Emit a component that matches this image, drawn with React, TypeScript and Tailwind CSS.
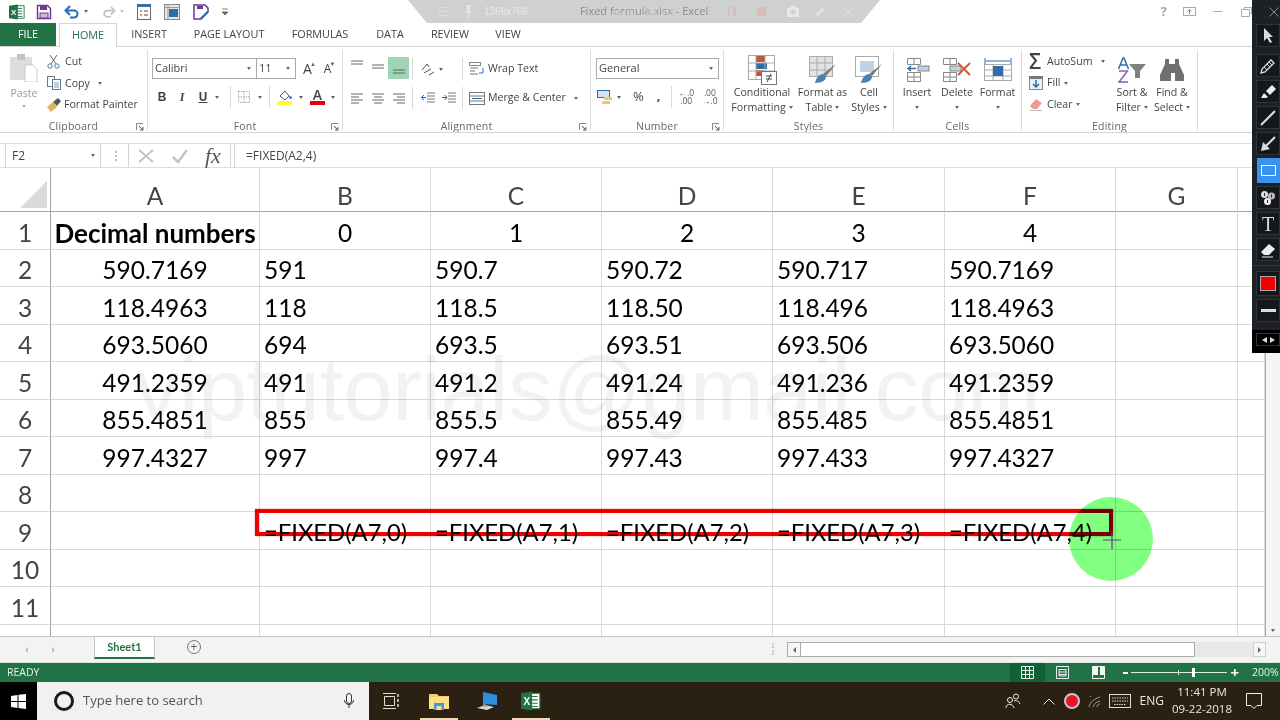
import type { ReactNode } from "react"

// Excel 2013 window with screen recorder overlays (1280x720)

const rows: string[][] = [
  ["590.7169", "591", "590.7", "590.72", "590.717", "590.7169"],
  ["118.4963", "118", "118.5", "118.50", "118.496", "118.4963"],
  ["693.5060", "694", "693.5", "693.51", "693.506", "693.5060"],
  ["491.2359", "491", "491.2", "491.24", "491.236", "491.2359"],
  ["855.4851", "855", "855.5", "855.49", "855.485", "855.4851"],
  ["997.4327", "997", "997.4", "997.43", "997.433", "997.4327"],
]

const cell = "border-r border-b border-[#d9d9d9] text-black flex items-center pt-[6px] overflow-visible whitespace-nowrap"
const rowHead = "border-r border-b border-r-[#a6a6a6] border-b-[#d9d9d9] text-[24.5px] text-[#444] flex items-center justify-center pt-[6px]"
const colHead = "border-r border-b border-r-[#d9d9d9] border-b-[#a6a6a6] text-[24.5px] text-[#444] flex items-center justify-center"

function Caret({ className = "" }: { className?: string }) {
  return <span className={"inline-block w-0 h-0 border-x-[2.5px] border-t-[3px] border-x-transparent border-t-[#666] " + className} />
}

function Sep({ className = "" }: { className?: string }) {
  return <span className={"w-px h-[22px] bg-[#d8d8d8] shrink-0 " + className} />
}

function Launcher() {
  return (
    <svg width="8" height="8" viewBox="0 0 8 8" className="absolute right-[3px] bottom-[2px]">
      <path d="M.5 7V.5H7" fill="none" stroke="#888" />
      <path d="M3 3l4 4M7 4v3H4" fill="none" stroke="#555" />
    </svg>
  )
}

function Group({ className, label, launcher, children }: { className: string; label: string; launcher?: boolean; children: ReactNode }) {
  return (
    <div className={"shrink-0 flex flex-col mt-[3px] h-[81px] border-r border-[#dcdcdc] " + className}>
      <div className="h-[70px] shrink-0">{children}</div>
      <div className="relative h-[13px] shrink-0 leading-[13px] text-center text-[10.5px] text-[#666] tracking-[0.2px]">
        {label}
        {launcher && <Launcher />}
      </div>
    </div>
  )
}

function BigButton({ className, icon, lines, caretOnly }: { className: string; icon: ReactNode; lines: string[]; caretOnly?: boolean }) {
  return (
    <div className={"shrink-0 flex flex-col items-center pt-[4px] text-[10.6px] leading-[15px] text-[#444] whitespace-nowrap " + className}>
      <div className="h-[31px] flex items-center justify-center">{icon}</div>
      {lines.map((l, i) => (
        <div key={l}>
          {l}
          {!caretOnly && i === lines.length - 1 && <Caret className="ml-[3px] mb-[2px]" />}
        </div>
      ))}
      {caretOnly && <Caret className="mt-[6px]" />}
    </div>
  )
}

function AlignIcon({ kind }: { kind: "l" | "c" | "r" | "t" | "m" | "b" }) {
  const lines: Record<string, string> = {
    l: "M1 3h12M1 6h8M1 9h12M1 12h8",
    c: "M1 3h12M3 6h8M1 9h12M3 12h8",
    r: "M1 3h12M5 6h8M1 9h12M5 12h8",
    t: "M1 2h12M1 5h12",
    m: "M1 6h12M1 9h12",
    b: "M1 9h12M1 12h12",
  }
  return (
    <svg width="14" height="15" viewBox="0 0 14 15">
      <path d={lines[kind]} stroke="#666" fill="none" />
    </svg>
  )
}

function ExcelLogo({ size }: { size: number }) {
  return (
    <svg width={size} height={size} viewBox="0 0 18 18">
      <rect x="8" y="2" width="9" height="14" fill="#fff" stroke="#217346" />
      <path d="M10 5h5M10 8h5M10 11h5M10 14h5" stroke="#217346" />
      <path d="M0 2l10-1.500v17L0 16z" fill="#217346" />
      <text x="2.200" y="12.500" fontSize="9" fontWeight="700" fill="#fff" fontFamily="Liberation Sans, sans-serif">X</text>
    </svg>
  )
}

function TitleBar() {
  return (
    <div className="h-[23px] shrink-0 flex items-center relative bg-white">
      <div className="ml-[9px]"><ExcelLogo size={16} /></div>
      <svg width="16" height="16" viewBox="0 0 16 16" className="ml-[11px]">
        <path d="M1.500 1.500h10l3 3v10h-13z" fill="none" stroke="#6b3a90" strokeWidth="1.500" />
        <rect x="4" y="2" width="7" height="4" fill="#6b3a90" />
        <rect x="4" y="9" width="8" height="5" fill="#cdb9dc" stroke="#6b3a90" />
      </svg>
      <svg width="16" height="14" viewBox="0 0 16 14" className="ml-[12px]">
        <path d="M2 5.500h8a3.500 3.500 0 0 1 0 7H6" fill="none" stroke="#2b6cb0" strokeWidth="2" />
        <path d="M6 1L1.500 5.500 6 10" fill="none" stroke="#2b6cb0" strokeWidth="2" />
      </svg>
      <Caret className="ml-[4px]" />
      <svg width="14" height="14" viewBox="0 0 16 14" className="ml-[14px]">
        <path d="M14 5.500H6a3.500 3.500 0 0 0 0 7h4" fill="none" stroke="#c4c4c4" strokeWidth="2" />
        <path d="M10 1l4.500 4.500L10 10" fill="none" stroke="#c4c4c4" strokeWidth="2" />
      </svg>
      <Caret className="ml-[4px] opacity-40" />
      <svg width="14" height="16" viewBox="0 0 14 16" className="ml-[13px]">
        <rect x=".5" y=".5" width="13" height="15" fill="#fff" stroke="#666" />
        <rect x="0" y="0" width="14" height="3" fill="#3f6f9f" />
        <path d="M3 7h2M7 7h4M3 11h2M7 11h4" stroke="#444" />
      </svg>
      <svg width="16" height="16" viewBox="0 0 16 16" className="ml-[13px]">
        <rect x=".5" y=".5" width="15" height="15" fill="#e4e8ec" stroke="#888" />
        <rect x="5" y="5" width="9" height="8" fill="#2f6ea5" />
        <path d="M0 3.500h16M4 0v16" stroke="#999" />
      </svg>
      <svg width="16" height="16" viewBox="0 0 16 16" className="ml-[13px]">
        <path d="M1 1h11l3 3v4L8 15H1z" fill="#fff" stroke="#6b3a90" strokeWidth="1.500" />
        <rect x="4" y="2" width="6" height="3" fill="#6b3a90" />
        <path d="M7 14l7-7 1.500 1.500-7 7z" fill="#2b6cb0" />
      </svg>
      <svg width="8" height="8" viewBox="0 0 8 8" className="ml-[12px]">
        <path d="M1 1h6M1 4h6l-3 3z" stroke="#666" fill="#666" strokeWidth=".8" />
      </svg>

      <div className="ml-auto mr-[28px] flex items-center text-[#a8a8a8]">
        <span className="text-[13px] font-bold mr-[16px]">?</span>
        <svg width="13" height="9" viewBox="0 0 13 9" className="mr-[17px]">
          <rect x=".5" y=".5" width="12" height="8" fill="none" stroke="#aaa" />
          <path d="M6.500 7V3M4.500 4.500l2-2 2 2" stroke="#888" fill="none" />
        </svg>
        <span className="w-[9px] h-[1.500px] bg-[#aaa] mr-[19px]" />
        <svg width="11" height="10" viewBox="0 0 11 10">
          <path d="M3 2.500V.5h7.500v6H8.500M.5 2.500h8v7h-8z" fill="none" stroke="#aaa" />
        </svg>
      </div>
    </div>
  )
}

// recorder's strip that hangs over the title bar
function RecorderStrip() {
  return (
    <div className="absolute left-[408px] top-0 w-[472px] h-[23px] bg-[#cfd0d0] [clip-path:polygon(0_0,100%_0,96%_100%,4%_100%)] flex items-center">
      <span className="ml-[30px] flex flex-col gap-[3px]">
        <span className="w-[10px] h-px bg-[#dedede]" />
        <span className="w-[10px] h-px bg-[#dedede]" />
        <span className="w-[10px] h-px bg-[#dedede]" />
      </span>
      <svg width="9" height="13" viewBox="0 0 9 13" className="ml-[16px]">
        <path d="M2 0h5v1L6 2v4l2 2H1l2-2V2L2 1zM4 8h1v5H4z" fill="#e2e6ea" />
      </svg>
      <span className="ml-[11px] text-[10px] text-[#e9e9e9] font-['Liberation_Sans',sans-serif]">1366x768</span>
      <span className="relative ml-[52px] w-[124px] text-[11px] text-[#8d8d8d] whitespace-nowrap text-center">
        Fixed formula.xlsx - Excel
        <span className="absolute left-[2px] right-0 top-0 text-[11px] text-[#d8d8d8] opacity-70">00:01:39:59</span>
      </span>
      <span className="ml-[24px] flex gap-[3px]">
        <span className="w-[2.500px] h-[9px] bg-[#d8bdb9]" />
        <span className="w-[2.500px] h-[9px] bg-[#d8bdb9]" />
      </span>
      <span className="ml-[21px] w-[9px] h-[9px] bg-[#d8bdb9]" />
      <svg width="14" height="11" viewBox="0 0 14 11" className="ml-[20px]">
        <path d="M1 2h3l1-2h4l1 2h3v9H1z" fill="#e8e8e8" />
        <circle cx="7" cy="6" r="2.500" fill="#cfd0d0" />
      </svg>
      <svg width="12" height="12" viewBox="0 0 12 12" className="ml-[14px]">
        <path d="M1 11l1-3 6-6 2 2-6 6z" fill="#dde3ea" />
      </svg>
      <svg width="9" height="9" viewBox="0 0 9 9" className="ml-[18px]">
        <path d="M.5.5l8 8M8.500.5l-8 8" stroke="#e2e2e2" fill="none" />
      </svg>
    </div>
  )
}

function Tabs() {
  const others = [
    ["INSERT", "w-[64px]"],
    ["PAGE LAYOUT", "w-[96px]"],
    ["FORMULAS", "w-[86px]"],
    ["DATA", "w-[54px]"],
    ["REVIEW", "w-[66px]"],
    ["VIEW", "w-[50px]"],
  ]
  return (
    <div className="h-[24px] shrink-0 flex text-[10.8px] text-[#444] border-b border-[#d4d4d4] bg-white">
      <div className="w-[56px] h-[23px] bg-[#217346] text-white flex items-center justify-center">FILE</div>
      <div className="ml-[3px] w-[58px] h-[24px] border-x border-t border-[#d4d4d4] bg-white text-[#217346] flex items-center justify-center">HOME</div>
      {others.map(([t, c]) => (
        <div key={t} className={"h-[23px] flex items-center justify-center " + c}>{t}</div>
      ))}
    </div>
  )
}

function Combo({ className, text }: { className: string; text: string }) {
  return (
    <div className={"h-[21px] border border-[#ababab] bg-white flex items-center justify-between pl-[2px] pr-[5px] text-[11px] text-[#444] " + className}>
      {text}
      <Caret />
    </div>
  )
}

function Ribbon() {
  return (
    <div className="h-[86px] shrink-0 flex border-b border-[#d4d4d4] bg-white text-[#444] overflow-hidden">
      {/* Clipboard */}
      <Group className="w-[148px]" label="Clipboard" launcher>
        <div className="flex">
          <div className="w-[47px] flex flex-col items-center pl-[1px] pt-[4px] text-[10.6px] text-[#9a9a9a]">
            <svg width="28" height="28" viewBox="0 0 28 28">
              <rect x="0" y="3" width="22" height="23" fill="#dcdcdc" />
              <rect x="7" y="0" width="8" height="6" fill="#c4c4c4" />
              <path d="M15 11h8l4 4v13H15z" fill="#fff" stroke="#c8c8c8" />
            </svg>
            <div className="mt-[4px] leading-[14px]">Paste</div>
            <Caret className="mt-[5px] opacity-50" />
          </div>
          <div className="flex flex-col text-[10.6px] leading-[21.500px] pt-[1px]">
            <div className="flex items-center h-[21.500px]">
              <svg width="14" height="14" viewBox="0 0 14 14" className="mr-[4px]">
                <circle cx="3" cy="11" r="2.200" fill="none" stroke="#4b7fb0" />
                <circle cx="10" cy="11" r="2.200" fill="none" stroke="#4b7fb0" />
                <path d="M4 9l6-9M9 9L3 0" stroke="#666" fill="none" />
              </svg>
              Cut
            </div>
            <div className="flex items-center h-[21.500px]">
              <svg width="14" height="14" viewBox="0 0 14 14" className="mr-[4px]">
                <rect x=".5" y=".5" width="7" height="10" fill="#fff" stroke="#777" />
                <rect x="5.500" y="3.500" width="8" height="10" fill="#fff" stroke="#4b7fb0" />
                <path d="M7 7h5M7 9h5M7 11h5" stroke="#999" />
              </svg>
              Copy
              <Caret className="ml-[8px]" />
            </div>
            <div className="flex items-center h-[21.500px]">
              <svg width="15" height="14" viewBox="0 0 15 14" className="mr-[2px]">
                <path d="M0 9l6-5 4 5-6 5z" fill="#e0b060" />
                <path d="M6 4l5-4 3 3-4 5z" fill="#555" />
              </svg>
              Format Painter
            </div>
          </div>
        </div>
      </Group>

      {/* Font */}
      <Group className="w-[195px]" label="Font" launcher>
        <div className="flex items-center pl-[4px] mt-[8px]">
          <Combo className="w-[105px]" text="Calibri" />
          <Combo className="w-[40px] -ml-px" text="11" />
          <span className="ml-[7px] text-[14px] leading-none relative">A<span className="absolute -top-[1px] -right-[4px] text-[6px] text-[#2b6cb0]">▲</span></span>
          <span className="ml-[12px] text-[12px] leading-none relative">A<span className="absolute -top-[2px] -right-[4px] text-[6px] text-[#2b6cb0]">▼</span></span>
        </div>
        <div className="flex items-center h-[22px] mt-[7px] pl-[4px] text-[12px]">
          <span className="w-[20px] text-center font-bold font-['Liberation_Sans',sans-serif]">B</span>
          <span className="w-[20px] text-center italic font-['Liberation_Serif',serif] font-bold">I</span>
          <span className="w-[22px] text-center underline font-bold">U</span>
          <Caret className="ml-[1px]" />
          <Sep className="ml-[11px]" />
          <svg width="12" height="12" viewBox="0 0 12 12" className="ml-[7px]">
            <rect x=".5" y=".5" width="11" height="11" fill="none" stroke="#aaa" strokeDasharray="1.500 1" />
            <path d="M6 0v12M0 6h12" stroke="#aaa" strokeDasharray="1.500 1" />
          </svg>
          <Caret className="ml-[8px]" />
          <Sep className="ml-[7px]" />
          <svg width="16" height="16" viewBox="0 0 16 16" className="ml-[7px]">
            <path d="M3 7l5-5 4 5-4 4z" fill="#fff" stroke="#555" />
            <circle cx="13.500" cy="8.500" r="1.500" fill="#3f78b5" />
            <rect x="0" y="12" width="15" height="4" fill="#ffff33" />
          </svg>
          <Caret className="ml-[6px]" />
          <span className="ml-[7px] w-[15px] h-[16px] relative text-center text-[14px] leading-[12px] font-semibold">
            A
            <span className="absolute left-0 right-0 bottom-0 h-[4px] bg-[#e00000]" />
          </span>
          <Caret className="ml-[6px]" />
        </div>
      </Group>

      {/* Alignment */}
      <Group className="w-[248px]" label="Alignment" launcher>
        <div className="flex items-center h-[24px] pl-[3px] mt-[7px]">
          <span className="w-[21px] flex justify-center -mt-[6px]"><AlignIcon kind="t" /></span>
          <span className="w-[21px] flex justify-center -mt-[6px]"><AlignIcon kind="m" /></span>
          <span className="w-[21px] h-[22px] -mt-[2px] bg-[#9fd5b7] flex justify-center items-center"><AlignIcon kind="b" /></span>
          <Sep className="ml-[3px]" />
          <svg width="14" height="14" viewBox="0 0 14 14" className="ml-[8px]">
            <path d="M1 8l5-6 2 3M3 11l7-4M8 13l5-3" stroke="#555" fill="none" />
          </svg>
          <Caret className="ml-[4px]" />
          <Sep className="ml-[19px]" />
          <svg width="16" height="14" viewBox="0 0 16 14" className="ml-[6px]">
            <rect x=".5" y=".5" width="11" height="3" fill="none" stroke="#888" />
            <path d="M1 6h8M1 9h5M1 12h8" stroke="#777" />
            <path d="M10 11h4V6" stroke="#2b6cb0" fill="none" />
          </svg>
          <span className="ml-[3px] text-[10.6px]">Wrap Text</span>
        </div>
        <div className="flex items-center h-[22px] mt-[6px] pl-[3px]">
          <span className="w-[21px] flex justify-center"><AlignIcon kind="l" /></span>
          <span className="w-[21px] flex justify-center"><AlignIcon kind="c" /></span>
          <span className="w-[21px] flex justify-center"><AlignIcon kind="r" /></span>
          <Sep className="ml-[3px]" />
          <svg width="14" height="12" viewBox="0 0 14 12" className="ml-[8px]">
            <path d="M6 1h8M6 4h8M6 7h8M6 10h8" stroke="#777" />
            <path d="M0 5.500h5M3 3L.5 5.500 3 8" stroke="#2b6cb0" fill="none" />
          </svg>
          <svg width="14" height="12" viewBox="0 0 14 12" className="ml-[7px]">
            <path d="M6 1h8M6 4h8M6 7h8M6 10h8" stroke="#777" />
            <path d="M0 5.500h5M2.500 3L5 5.500 2.500 8" stroke="#2b6cb0" fill="none" />
          </svg>
          <Sep className="ml-[6px]" />
          <svg width="16" height="13" viewBox="0 0 16 13" className="ml-[6px]">
            <rect x=".5" y=".5" width="15" height="12" fill="none" stroke="#777" />
            <path d="M0 4h16M0 9h16" stroke="#777" />
            <path d="M3 6.500h10" stroke="#2b6cb0" />
          </svg>
          <span className="ml-[3px] text-[10.6px]">Merge &amp; Center</span>
          <Caret className="ml-[8px]" />
        </div>
      </Group>

      {/* Number */}
      <Group className="w-[133px]" label="Number" launcher>
        <div className="pl-[5px] mt-[8px]">
          <Combo className="w-[123px]" text="General" />
        </div>
        <div className="flex items-center h-[22px] mt-[7px] pl-[6px]">
          <svg width="16" height="15" viewBox="0 0 16 15">
            <rect x=".5" y=".5" width="12" height="7" fill="#d6e4f0" stroke="#2b6cb0" />
            <rect x="7" y="7" width="8" height="3" fill="#f0c674" />
            <rect x="5" y="11" width="8" height="3" fill="#f0c674" />
          </svg>
          <Caret className="ml-[4px]" />
          <span className="ml-[12px] text-[13px]">%</span>
          <span className="ml-[13px] text-[13px] font-bold leading-none mb-[4px]">,</span>
          <Sep className="ml-[11px]" />
          <span className="ml-[6px] text-[8.500px] leading-[8px] text-center text-[#555]"><span className="text-[#2b6cb0]">←</span>.0<br />.00</span>
          <span className="ml-[8px] text-[8.500px] leading-[8px] text-center text-[#555]">.00<br /><span className="text-[#2b6cb0]">→</span>.0</span>
        </div>
      </Group>

      {/* Styles */}
      <Group className="w-[170px]" label="Styles">
        <div className="flex">
          <BigButton
            className="w-[76px]"
            lines={["Conditional", "Formatting"]}
            icon={
              <svg width="29" height="30" viewBox="0 0 29 30">
                <rect x=".5" y=".5" width="26" height="24" fill="#fff" stroke="#aaa" />
                <rect x="8" y="1" width="9" height="6" fill="#c8553a" />
                <rect x="8" y="8" width="11" height="6" fill="#2f6ea5" />
                <rect x="8" y="15" width="7" height="6" fill="#c8553a" />
                <path d="M8 0v25M17 0v25M0 8h27M0 16h27" stroke="#aaa" />
                <rect x="13.500" y="16.500" width="15" height="13" fill="#fff" stroke="#777" />
                <path d="M18 21h6M18 24h6M23 19l-4 8" stroke="#444" fill="none" />
              </svg>
            }
          />
          <BigButton
            className="w-[45px]"
            lines={["Format as", "Table"]}
            icon={
              <svg width="28" height="28" viewBox="0 0 28 28">
                <rect x=".5" y=".5" width="23" height="20" fill="#dfe3e8" stroke="#aaa" />
                <path d="M8 0v21M16 0v21M0 7h24M0 14h24" stroke="#aaa" />
                <path d="M27 8L17 20l-3-2z" fill="#777" />
                <path d="M6 27c1-5 4-9 8-9l3 2c0 4-3 7-11 7z" fill="#4b7fb0" />
              </svg>
            }
          />
          <BigButton
            className="w-[48px]"
            lines={["Cell", "Styles"]}
            icon={
              <svg width="28" height="28" viewBox="0 0 28 28">
                <rect x=".5" y=".5" width="23" height="20" fill="#fff" stroke="#aaa" />
                <rect x="5" y="5" width="14" height="11" fill="#bcd3e8" />
                <path d="M27 8L17 20l-3-2z" fill="#777" />
                <path d="M6 27c1-5 4-9 8-9l3 2c0 4-3 7-11 7z" fill="#4b7fb0" />
              </svg>
            }
          />
        </div>
      </Group>

      {/* Cells */}
      <Group className="w-[128px]" label="Cells">
        <div className="flex pl-[1px]">
          <BigButton
            className="w-[44px]"
            caretOnly
            lines={["Insert"]}
            icon={
              <svg width="26" height="26" viewBox="0 0 26 26">
                <path d="M3.500 1.500h13v6h-13zM10 1.500v6M3.500 15.500h13v9h-13zM3.500 20h13M10 15.500v9" fill="none" stroke="#888" />
                <rect x="14" y="9" width="11" height="5" fill="#bcd3e8" stroke="#888" />
                <path d="M12 11.500H4M7 9l-3 2.500L7 14" stroke="#2b6cb0" fill="none" strokeWidth="1.500" />
              </svg>
            }
          />
          <BigButton
            className="w-[36px]"
            caretOnly
            lines={["Delete"]}
            icon={
              <svg width="30" height="26" viewBox="0 0 30 26">
                <path d="M1.500 1.500h13v6h-13zM8 1.500v6M1.500 15.500h13v9h-13zM1.500 20h13M8 15.500v9" fill="none" stroke="#888" />
                <rect x="8" y="9" width="11" height="5" fill="#bcd3e8" stroke="#888" />
                <path d="M16 6l12 12M28 6L16 18" stroke="#d0553a" strokeWidth="1.800" fill="none" />
              </svg>
            }
          />
          <BigButton
            className="w-[45px]"
            caretOnly
            lines={["Format"]}
            icon={
              <svg width="28" height="28" viewBox="0 0 28 28">
                <path d="M1 2v6M27 2v6M2 5h24" stroke="#2b6cb0" fill="none" />
                <rect x=".5" y="8.500" width="27" height="16" fill="#fff" stroke="#aaa" />
                <path d="M9 8v17M19 8v17M0 14h28M0 20h28" stroke="#aaa" />
                <rect x="9" y="10" width="10" height="10" fill="#2f6ea5" />
              </svg>
            }
          />
        </div>
      </Group>

      {/* Editing */}
      <Group className="w-[176px]" label="Editing">
        <div className="flex">
          <div className="w-[90px] pl-[7px] pt-[1px] text-[10.6px] flex flex-col">
            <div className="h-[21.500px] flex items-center">
              <span className="w-[16px] text-[21px] leading-none font-semibold text-[#444]">Σ</span>
              <span className="ml-[2px]">AutoSum</span>
              <Caret className="ml-[9px]" />
            </div>
            <div className="h-[21.500px] flex items-center">
              <svg width="14" height="14" viewBox="0 0 14 14" className="mr-[4px]">
                <rect x=".5" y=".5" width="13" height="13" fill="#e8f0f8" stroke="#888" />
                <rect x="0" y="0" width="14" height="3" fill="#777" />
                <path d="M7 4v7M4 8l3 3 3-3" stroke="#2b6cb0" strokeWidth="1.500" fill="none" />
              </svg>
              Fill
              <Caret className="ml-[3px]" />
            </div>
            <div className="h-[21.500px] flex items-center">
              <svg width="14" height="13" viewBox="0 0 14 13" className="mr-[4px]">
                <path d="M1 8l6-7 6 4-5 6H4z" fill="#ee9a92" />
                <path d="M1 12.500h12" stroke="#b8b8b8" />
              </svg>
              Clear
              <Caret className="ml-[3px]" />
            </div>
          </div>
          <BigButton
            className="w-[40px]"
            lines={["Sort &", "Filter"]}
            icon={
              <svg width="29" height="26" viewBox="0 0 29 26">
                <path d="M.5 12L5 1h1l4.500 11M2.500 8h6" fill="none" stroke="#2b6cb0" strokeWidth="1.500" />
                <path d="M1 14h8.500L1 25h9" fill="none" stroke="#8a5fb5" strokeWidth="1.500" />
                <path d="M11 7h17l-6 7v7h-5v-7z" fill="#808080" />
              </svg>
            }
          />
          <BigButton
            className="w-[40px]"
            lines={["Find &", "Select"]}
            icon={
              <svg width="26" height="24" viewBox="0 0 26 24">
                <path d="M6 1h4v5h6V1h4v5l5 11v6h-9v-8h-4v8H1v-6L6 6z" fill="#707070" />
              </svg>
            }
          />
        </div>
      </Group>
    </div>
  )
}

function FormulaBar() {
  return (
    <div className="h-[35px] shrink-0 flex flex-col bg-white">
      <div className="h-[10px]" />
      <div className="h-[25px] flex items-center bg-white border-y border-[#dcdcdc] pl-[5px] text-[12px] text-[#444]">
        <div className="w-[96px] h-full border-x border-[#d4d4d4] flex items-center justify-between pl-[6px] pr-[5px]">F2<Caret /></div>
        <div className="w-[3px] h-[10px] ml-[14px] border-l-2 border-dotted border-[#bbb]" />
        <div className="ml-[10px] w-[103px] h-full border-x border-[#d4d4d4] flex items-center">
          <svg width="18" height="16" viewBox="0 0 18 16" className="ml-[8px]">
            <path d="M2 2l14 12M16 2L2 14" stroke="#c4c4c4" strokeWidth="2" fill="none" />
          </svg>
          <svg width="18" height="16" viewBox="0 0 18 16" className="ml-[16px]">
            <path d="M2 9l5 5L16 2" stroke="#c4c4c4" strokeWidth="2.500" fill="none" />
          </svg>
          <span className="ml-[16px] text-[22px] leading-none italic font-['Liberation_Serif',serif] text-[#555]">fx</span>
        </div>
        <div className="ml-[3px] flex-1 h-full border-l border-[#d4d4d4] flex items-center pl-[11px] text-[#444] text-[12px]">=FIXED(A2,4)</div>
      </div>
    </div>
  )
}

function Sheet() {
  const columns = ["A", "B", "C", "D", "E", "F", "G", ""]
  return (
    <div className="h-[468px] shrink-0 flex overflow-hidden font-['Lato',sans-serif] relative">
      <div className="w-[1265px] grid grid-cols-[51px_209px_171px_171px_171px_172px_171px_122px_27px] grid-rows-[44px_37.5px_37.5px_37.5px_37.5px_37.5px_37.5px_37.5px_37.5px_37.5px_37.5px_37.5px_12px] content-start">
        <div className="border-r border-b border-r-[#a6a6a6] border-b-[#a6a6a6] flex items-end justify-end pr-[3px] pb-[3px]">
          <span className="w-[27px] h-[27px] bg-[#d9d9d9] [clip-path:polygon(100%_0,100%_100%,0_100%)]" />
        </div>
        {columns.map((c, i) => (
          <div key={i} className={colHead + " pt-[14px]"}>{c}</div>
        ))}

        <div className={rowHead}>1</div>
        <div className={cell + " justify-center font-bold text-[26px]"}>Decimal numbers</div>
        {["0", "1", "2", "3", "4"].map((n) => (
          <div key={n} className={cell + " justify-center text-[24.5px]"}>{n}</div>
        ))}
        <div className={cell} />
        <div className={cell} />

        {rows.map((r, i) => (
          <Row key={i} n={i + 2} values={r} />
        ))}

        <Row n={8} values={["", "", "", "", "", ""]} />
        <Row n={9} small values={["", "=FIXED(A7,0)", "=FIXED(A7,1)", "=FIXED(A7,2)", "=FIXED(A7,3)", "=FIXED(A7,4)"]} />
        <Row n={10} values={["", "", "", "", "", ""]} />
        <Row n={11} values={["", "", "", "", "", ""]} />
        <Row n={0} values={["", "", "", "", "", ""]} />
      </div>
      <div className="flex-1 bg-[#f5f5f5] border-l border-[#ababab] flex flex-col justify-end items-center pb-[4px]">
        <Caret />
      </div>
    </div>
  )
}

function Row({ n, values, small }: { n: number; values: string[]; small?: boolean }) {
  return (
    <>
      <div className={rowHead}>{n > 0 ? n : ""}</div>
      {values.map((v, i) => (
        <div key={i} className={cell + (i === 0 ? " justify-center" : " pl-[4px]") + (small ? " text-[23.8px]" : " text-[24.5px]")}>{v}</div>
      ))}
      <div className={cell} />
      <div className={cell} />
    </>
  )
}

function SheetTabs() {
  return (
    <div className="h-[26px] shrink-0 flex items-start bg-[#f3f3f3] border-t border-[#c4c4c4]">
      <span className="ml-[25px] mt-[10px] w-0 h-0 border-y-[3px] border-r-[3px] border-y-transparent border-r-[#c0c0c0]" />
      <span className="ml-[24px] mt-[10px] w-0 h-0 border-y-[3px] border-l-[3px] border-y-transparent border-l-[#c0c0c0]" />
      <div className="ml-[39px] -mt-px w-[61px] h-[23px] bg-white border-x border-t border-[#c4c4c4] border-b-2 border-b-[#217346] flex items-center justify-center text-[11px] font-bold text-[#217346] font-['Lato',sans-serif]">
        Sheet1
      </div>
      <span className="ml-[32px] mt-[3px] w-[14px] h-[14px] rounded-full border border-[#777] flex items-center justify-center text-[#666] text-[12px] leading-none">+</span>
      <div className="ml-[571px] mt-[6px] w-[3px] h-[12px] border-l-2 border-dotted border-[#c8c8c8]" />
      <div className="ml-[12px] mt-[5px] w-[14px] h-[15px] bg-[#f6f6f6] border border-[#ababab] flex items-center justify-center">
        <span className="w-0 h-0 border-y-[3px] border-r-[3px] border-y-transparent border-r-[#666]" />
      </div>
      <div className="mt-[5px] w-[394px] h-[15px] bg-white border-y border-r border-[#ababab]" />
      <div className="mt-[5px] w-[58px] h-[15px] bg-[#e8e8e8]" />
      <div className="mt-[5px] w-[13px] h-[15px] bg-[#f6f6f6] border border-[#d0d0d0] flex items-center justify-center">
        <span className="w-0 h-0 border-y-[3px] border-l-[3px] border-y-transparent border-l-[#666]" />
      </div>
    </div>
  )
}

function StatusBar() {
  return (
    <div className="h-[20px] shrink-0 flex items-center bg-[#217346] border-t border-[#d8e8de] text-[10.5px] text-[#e8f2ec]">
      <span className="ml-[7px]">READY</span>
      <div className="ml-auto flex items-center h-full">
        <div className="w-[35px] h-full bg-[#0f6234] flex items-center justify-center">
          <svg width="13" height="13" viewBox="0 0 13 13">
            <path d="M.5.5h12v12H.5zM4.500.5v12M8.500.5v12M.5 4.500h12M.5 8.500h12" fill="none" stroke="#e8f2ec" />
          </svg>
        </div>
        <svg width="13" height="13" viewBox="0 0 13 13" className="ml-[11px]">
          <path d="M.5.5h12v12H.5z M3 3.500h7M3 6h7M3 8.500h7M3 3v7h7V3" fill="none" stroke="#e8f2ec" />
        </svg>
        <svg width="13" height="13" viewBox="0 0 13 13" className="ml-[23px]">
          <path d="M.5.5h12v12H.5z" fill="none" stroke="#f4f8f5" />
          <rect x="1" y="1" width="5" height="8" fill="#f4f8f5" />
          <rect x="8" y="1" width="4" height="8" fill="#f4f8f5" />
        </svg>
        <span className="ml-[18px] w-[5px] h-[2px] bg-white" />
        <div className="ml-[3px] w-[96px] h-[9px] relative flex items-center">
          <span className="w-full h-px bg-[#dfeee5]" />
          <span className="absolute left-[47px] h-[5px] w-px bg-[#dfeee5]" />
          <span className="absolute left-[61px] h-[9px] w-[3px] bg-white" />
        </div>
        <span className="ml-[3px] text-[15px] leading-none font-bold text-white">+</span>
        <span className="ml-[13px] mr-[3px] w-[25px] whitespace-nowrap text-[10.5px]">200%</span>
      </div>
    </div>
  )
}

function Taskbar() {
  return (
    <div className="h-[38px] shrink-0 flex items-center bg-[#2b2113] text-white relative">
      <div className="w-[37px] h-full bg-black flex items-center justify-center">
        <svg width="15" height="15" viewBox="0 0 15 15">
          <path d="M0 2l6.500-1v6H0zM7.500.8L15 0v7H7.500zM0 8h6.500v6L0 13zM7.500 8H15v7l-7.500-1z" fill="#fff" />
        </svg>
      </div>
      <div className="w-[332px] h-full bg-[#f1f1f1] flex items-center text-[#555]">
        <span className="ml-[17px] w-[20px] h-[20px] rounded-full border-[3px] border-[#1a1a1a]" />
        <span className="ml-[9px] font-['Open_Sans',sans-serif] text-[13px]">Type here to search</span>
        <svg width="10" height="16" viewBox="0 0 10 16" className="ml-auto mr-[15px]">
          <rect x="2.500" y=".5" width="5" height="10" rx="2.500" fill="none" stroke="#333" />
          <path d="M.5 7c0 6 9 6 9 0M5 12v3" fill="none" stroke="#333" />
        </svg>
      </div>
      <svg width="16" height="18" viewBox="0 0 16 18" className="ml-[14px]">
        <path d="M1.500 4.500h10v9h-10zM0 1.500h13M0 16.500h13" fill="none" stroke="#ddd" />
        <path d="M15 2v3M15 7v3M15 12v3" stroke="#ddd" strokeWidth="1.500" />
      </svg>
      <div className="relative ml-[21px] w-[38px] h-full flex items-center justify-center">
        <svg width="20" height="18" viewBox="0 0 20 18">
          <path d="M0 2h8l2 2h10v13H0z" fill="#f4cf63" />
          <rect x="0" y="5" width="20" height="12" fill="#fbe08a" />
          <rect x="5" y="11" width="10" height="7" fill="#3f9bd8" />
          <rect x="7.500" y="14" width="5" height="4" fill="#fbe08a" />
        </svg>
        <span className="absolute left-0 right-0 bottom-0 h-[2px] bg-[#f4d9b8]" />
      </div>
      <svg width="22" height="20" viewBox="0 0 22 20" className="ml-[18px]">
        <path d="M7 1l14 3v10l-14-1z" fill="#2f8ee0" />
        <path d="M1 17l8-3 9 2-7 3z" fill="#d8d8d8" />
        <path d="M7 13l4 1v2H7z" fill="#9ab" />
      </svg>
      <div className="relative ml-[14px] w-[38px] h-full flex items-center justify-center">
        <ExcelLogo size={20} />
        <span className="absolute left-0 right-0 bottom-0 h-[2px] bg-[#f4d9b8]" />
      </div>

      <div className="ml-auto flex items-center h-full">
        <svg width="18" height="16" viewBox="0 0 18 16" className="mr-[20px]">
          <circle cx="5" cy="7" r="2.500" fill="none" stroke="#eee" />
          <path d="M1 15c0-5 7-5 8 0" fill="none" stroke="#eee" />
          <circle cx="11" cy="3.500" r="2.500" fill="none" stroke="#eee" />
          <path d="M9 8c2-1 5 0 6 3" fill="none" stroke="#eee" />
        </svg>
        <svg width="12" height="7" viewBox="0 0 12 7" className="mr-[9px]">
          <path d="M.5 6.500L6 1l5.500 5.500" fill="none" stroke="#eee" />
        </svg>
        <span className="w-[16px] h-[16px] rounded-full bg-[#e8142a] border-2 border-[#c8c8c8] mr-[8px]" />
        <svg width="14" height="14" viewBox="0 0 14 14" className="mr-[7px]">
          <path d="M2 2l1 1M1 13C2 8 6 5 12 3M5 13c1-3 3-5 7-6M9 13c0-2 1-3 3-3" fill="none" stroke="#9a9a9a" />
        </svg>
        <svg width="22" height="14" viewBox="0 0 22 14" className="mr-[9px]">
          <rect x=".5" y=".5" width="21" height="13" fill="none" stroke="#ddd" />
          <path d="M3 4h16M3 7h16M5 10.500h12" stroke="#ddd" strokeDasharray="1.500 1" />
        </svg>
        <span className="text-[12px] mr-[7px] text-[#e8e8e8] font-['Open_Sans',sans-serif]">ENG</span>
        <div className="w-[62px] -mt-[2px] flex flex-col items-center text-[11.5px] leading-[17px] text-[#e8e8e8]">
          <span>11:41 PM</span>
          <span>09-22-2018</span>
        </div>
        <svg width="16" height="16" viewBox="0 0 16 16" className="ml-[13px] mr-[18px]">
          <path d="M.5.5h15v12H11L8 15.500 5 12.500H.5z" fill="none" stroke="#eee" />
        </svg>
      </div>
    </div>
  )
}

const toolBtn = "ml-[4px] w-[24px] h-[23px] border border-[#2d3338] bg-[#14181c] flex items-center justify-center"

function ToolBar() {
  return (
    <div className="absolute right-0 top-0 w-[28px] h-[353px] bg-black flex flex-col">
      <div className="h-[330px] bg-[#1d2125] flex flex-col">
        <div className="h-[24px] flex items-center justify-end pr-[1px]">
          <svg width="10" height="10" viewBox="0 0 10 10"><path d="M.5.5l9 9M9.500.5l-9 9" stroke="#8a8a8a" fill="none" /></svg>
        </div>
        <div className={toolBtn}>
          <svg width="11" height="15" viewBox="0 0 11 15"><path d="M1 0l9 9H6l3 5-2 1-3-5-3 3z" fill="#dcdcdc" /></svg>
        </div>
        <div className={toolBtn + " mt-[7px]"}>
          <svg width="16" height="16" viewBox="0 0 16 16">
            <path d="M1 15l1-4L11 2l3 3-9 9z" fill="none" stroke="#dcdcdc" strokeWidth="1.300" />
            <path d="M4 9l3 3M7 6l3 3M9 4l3 3" stroke="#dcdcdc" />
          </svg>
        </div>
        <div className={toolBtn + " mt-[3px]"}>
          <svg width="17" height="16" viewBox="0 0 17 16">
            <path d="M6 7l6-6 4 4-6 6z" fill="#eee" />
            <path d="M4 9l4 4-2 1H1z" fill="#eee" />
          </svg>
        </div>
        <div className={toolBtn + " mt-[3px]"}>
          <svg width="16" height="16" viewBox="0 0 16 16"><path d="M1 15L15 1" stroke="#dcdcdc" strokeWidth="2" /></svg>
        </div>
        <div className={toolBtn + " mt-[3px]"}>
          <svg width="16" height="16" viewBox="0 0 16 16">
            <path d="M15 1L5 11" stroke="#dcdcdc" strokeWidth="2" />
            <path d="M1 15l2-9 7 7z" fill="#dcdcdc" />
          </svg>
        </div>
        <div className="mt-[3px] ml-[5px] h-[25px] bg-[#3894ee] flex items-center justify-center">
          <span className="w-[15px] h-[11px] border border-white" />
        </div>
        <div className={toolBtn + " mt-[3px]"}>
          <svg width="16" height="16" viewBox="0 0 16 16">
            <circle cx="4.500" cy="4.500" r="3.500" fill="#ddd" />
            <circle cx="11.500" cy="6" r="3.500" fill="#bbb" />
            <circle cx="7.500" cy="11.500" r="3.500" fill="#eee" />
            <path d="M4.500 3v3M11.500 4.500v3M7.500 10v3" stroke="#222" />
          </svg>
        </div>
        <div className={toolBtn + " mt-[3px] text-[#d8d8d8] text-[20px] leading-none font-['Liberation_Serif',serif]"}>T</div>
        <div className={toolBtn + " mt-[3px]"}>
          <svg width="16" height="16" viewBox="0 0 16 16">
            <path d="M1 10l8-8 6 5-6 6H4z" fill="#eee" />
            <path d="M2 15h11" stroke="#eee" />
          </svg>
        </div>
        <div className="mt-[4px] h-px bg-[#34393e]" />
        <div className={toolBtn + " mt-[5px] h-[25px]"}>
          <span className="w-[16px] h-[15px] bg-[#f00000] border border-[#aaa]" />
        </div>
        <div className={toolBtn + " mt-[3px]"}>
          <span className="w-[15px] h-[3px] bg-[#ddd]" />
        </div>
      </div>
      <div className="mt-[3px] ml-[4px] w-[24px] h-[13px] border border-[#333] flex items-center justify-center gap-[3px]">
        <span className="w-0 h-0 border-y-[3px] border-r-[5px] border-y-transparent border-r-[#ddd]" />
        <span className="w-0 h-0 border-y-[3px] border-l-[5px] border-y-transparent border-l-[#ddd]" />
      </div>
    </div>
  )
}

export default function App() {
  return (
    <div className="relative w-[1280px] h-[720px] overflow-hidden flex flex-col bg-white font-['Open_Sans',sans-serif]">
      <TitleBar />
      <Tabs />
      <Ribbon />
      <FormulaBar />
      <Sheet />
      <SheetTabs />
      <StatusBar />
      <Taskbar />

      {/* overlays from the recorder */}
      <RecorderStrip />
      <ToolBar />
      <div className="absolute left-[135px] top-[340px] text-[88.5px] leading-[100px] text-[#f2f2f2] mix-blend-multiply whitespace-nowrap font-['Liberation_Sans',sans-serif] tracking-[-0.5px]">
        viptutorials@gmail.com
      </div>
      <div className="absolute left-[255px] top-[509px] w-[858px] h-[27px] border-[4px] border-[#ee0000] mix-blend-multiply shadow-[0_0_2px_#ff9090]" />
      <div className="absolute left-[1069px] top-[497px] w-[84px] h-[84px] rounded-full bg-[#80ff80] mix-blend-multiply" />
      <svg width="18" height="18" viewBox="0 0 18 18" className="absolute left-[1103px] top-[531px]">
        <path d="M9 0v18M0 9h18" stroke="#6a3a8a" strokeWidth="1.200" />
      </svg>
    </div>
  )
}
